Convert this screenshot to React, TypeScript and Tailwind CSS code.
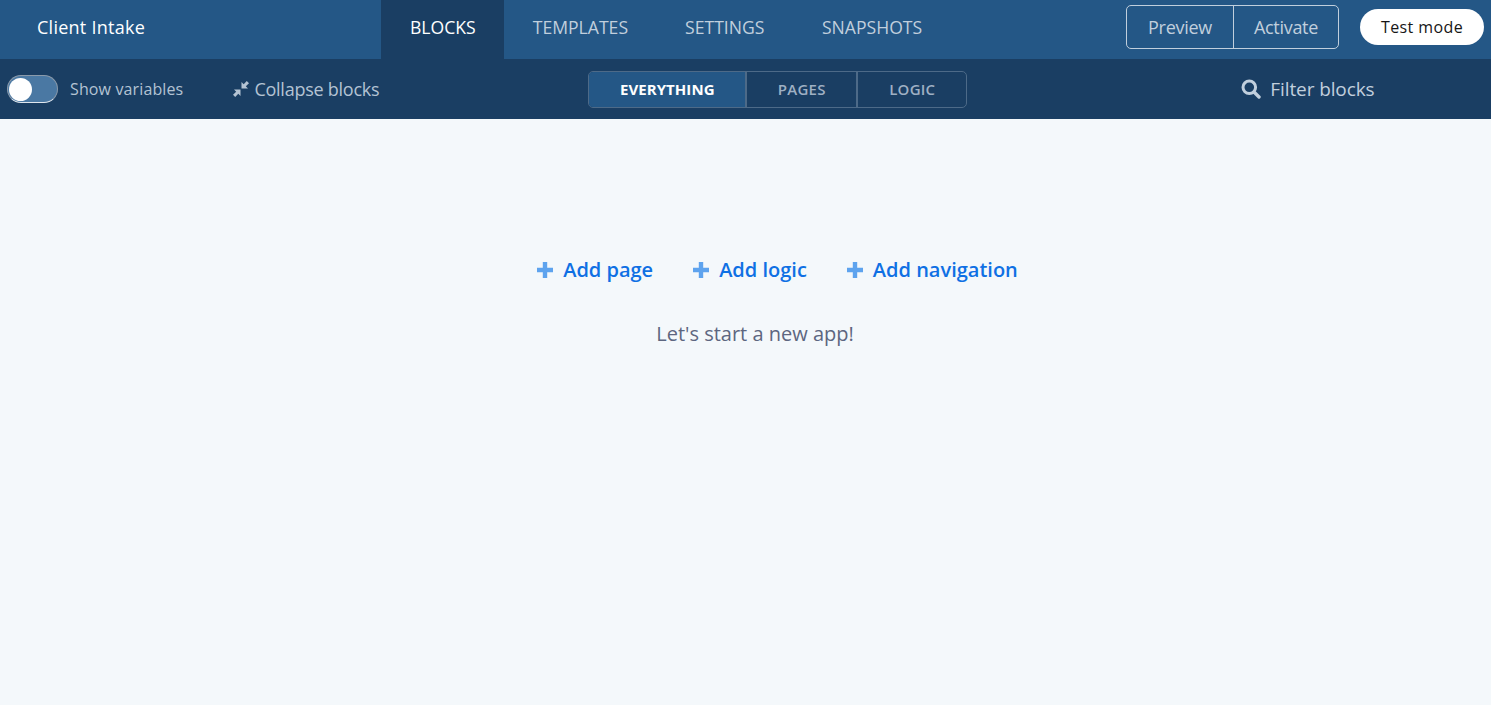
import React from "react";

function Plus() {
  return (
    <svg width="16" height="16" viewBox="0 0 16 16" className="mr-[10px] shrink-0">
      <path d="M5.8 0h4.4v5.8H16v4.4h-5.8V16H5.8v-5.8H0V5.8h5.8z" fill="#5ea3ee" />
    </svg>
  );
}

function Compress() {
  return (
    <svg width="16" height="16" viewBox="0 0 16 16" className="mr-[5px] shrink-0">
      <path d="M8.5 1v6.5H15l-2.2-2.2L16 2.2 13.8 0l-3.1 3.2z" fill="#b4c3d3" />
      <path d="M7.5 15V8.5H1l2.2 2.2L0 13.8 2.2 16l3.1-3.2z" fill="#b4c3d3" />
    </svg>
  );
}

export default function App() {
  return (
    <div className="h-[705px] bg-[#f4f8fb] overflow-hidden font-['Open_Sans']">
      {/* Top nav */}
      <div className="h-[59px] bg-[#245786] flex items-stretch">
        <div className="w-[381px] pl-[37px] pb-[4px] flex items-center text-[18px] text-white tracking-[0.26px]">Client Intake</div>
        <div className="flex text-[17.6px] text-[#c1cfdd]">
          <div className="bg-[#1a3e63] pl-[29px] pr-[28px] pb-[4px] flex items-center text-white">BLOCKS</div>
          <div className="pl-[29px] pr-[28.5px] pb-[4px] flex items-center">TEMPLATES</div>
          <div className="pl-[28.5px] pr-[29px] pb-[4px] flex items-center">SETTINGS</div>
          <div className="px-[28.5px] pb-[4px] flex items-center">SNAPSHOTS</div>
        </div>
        <div className="ml-auto flex items-center pr-[7px] pb-[4px]">
          <div className="flex h-[44px] border border-[#c1cfdd] rounded-[5px] text-[18px] text-[#c1cfdd] tracking-[-0.3px] mb-[1px]">
            <div className="w-[107px] flex items-center justify-center border-r border-[#c1cfdd]">Preview</div>
            <div className="w-[104px] flex items-center justify-center">Activate</div>
          </div>
          <div className="ml-[21px] mb-[2px] w-[124px] h-[36px] bg-white rounded-full flex items-center justify-center text-[16px] font-medium tracking-[0.4px] text-[#161616]">
            Test mode
          </div>
        </div>
      </div>

      {/* Toolbar */}
      <div className="h-[60px] bg-[#1a3e63] flex items-center">
        <div className="ml-[7px] w-[51px] h-[28px] rounded-full bg-[#4a78a3] border border-[#8a9aab] border-b-[#dfe6ee] flex items-center pl-[1px]">
          <div className="w-[23px] h-[23px] rounded-full bg-white" />
        </div>
        <span className="ml-[12px] text-[16px] text-[#b4c3d3] tracking-[0.13px]">Show variables</span>
        <div className="ml-[50px] flex items-center text-[18px] text-[#b4c3d3] tracking-[-0.25px]">
          <Compress />
          Collapse blocks
        </div>
        <div className="ml-[209px] flex h-[37px] border border-[#4d6a88] rounded-[5px] text-[15px] font-semibold tracking-[0.25px] text-[#9fb0c3]">
          <div className="w-[158px] bg-[#245786] rounded-l-[4px] flex items-center justify-center text-white font-bold tracking-[0.05px] border-r-2 border-[#4d6a88]">EVERYTHING</div>
          <div className="w-[111px] flex items-center justify-center border-r-2 border-[#4d6a88]">PAGES</div>
          <div className="w-[108px] flex items-center justify-center">LOGIC</div>
        </div>
        <div className="ml-[274px] flex items-center text-[19px] text-[#c1cfdd] tracking-[-0.1px]">
          <svg width="20" height="20" viewBox="0 0 20 20" className="mr-[9px]">
            <circle cx="8.3" cy="8.3" r="6.3" fill="none" stroke="#c1cfdd" strokeWidth="3" />
            <path d="M13 13l5 5" stroke="#c1cfdd" strokeWidth="3.4" strokeLinecap="round" />
          </svg>
          Filter blocks
        </div>
      </div>

      {/* Empty state */}
      <div className="flex flex-col items-center pt-[134px] pl-[19px]">
        <div className="flex items-center ml-[45px] text-[20px] font-semibold text-[#0f70e4] leading-[34px]">
          <div className="flex items-center"><Plus />Add page</div>
          <div className="flex items-center ml-[40px]"><Plus />Add logic</div>
          <div className="flex items-center ml-[40px]"><Plus />Add navigation</div>
        </div>
        <div className="mt-[32px] text-[20px] text-[#5d6680] leading-[30px]">Let's start a new app!</div>
      </div>
    </div>
  );
}
